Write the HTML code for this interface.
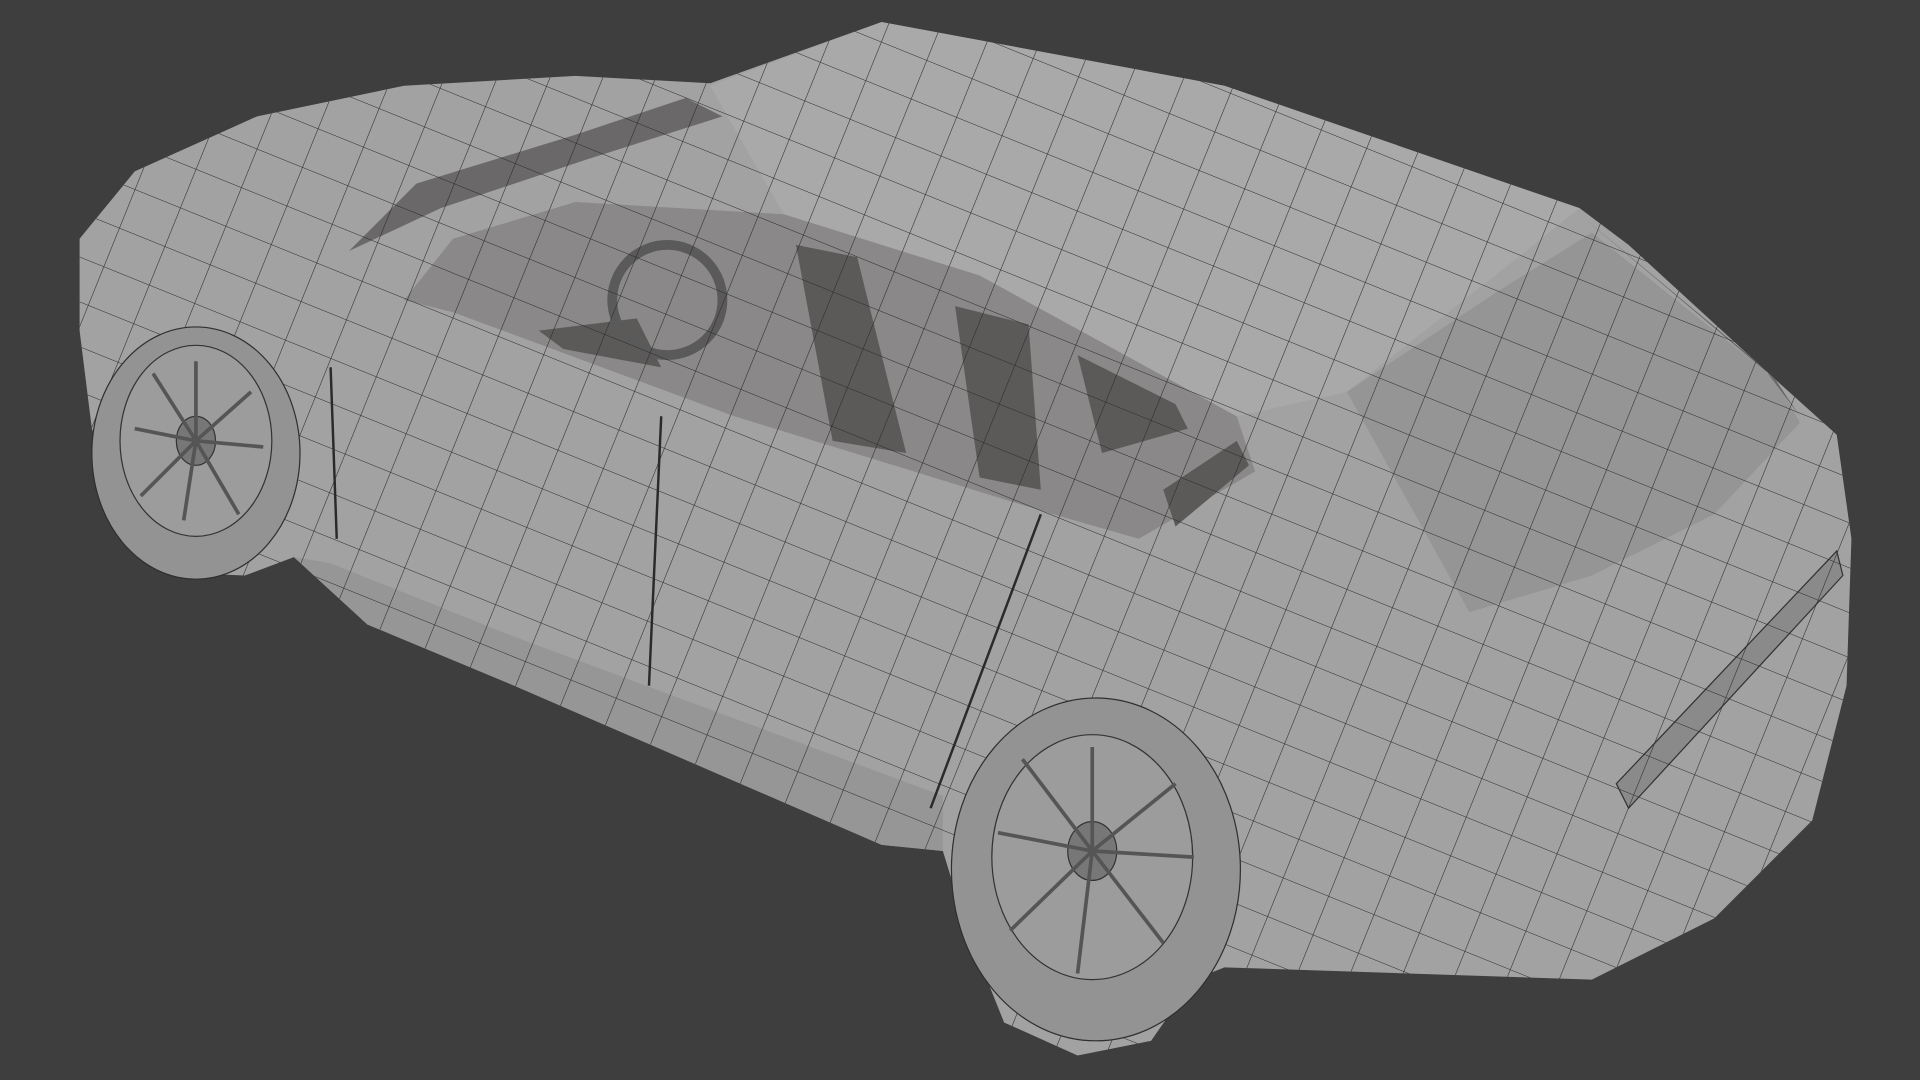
<!DOCTYPE html>
<html><head><meta charset="utf-8"><style>html,body{margin:0;padding:0;background:#3e3e3e;width:1920px;height:1080px;overflow:hidden}svg{display:block}</style></head>
<body>
<svg width="1920" height="1080" viewBox="0 0 1568 882" preserveAspectRatio="none" xmlns="http://www.w3.org/2000/svg">
<defs>
<pattern id="g" width="40" height="34" patternUnits="userSpaceOnUse" patternTransform="rotate(22)">
<path d="M0 0H40M0 0V34" stroke="#2a2a2a" stroke-width="0.9" fill="none"/>
</pattern>
<clipPath id="car"><path id="sil" d="M65 195 L110 140 L210 95 L330 70 L470 62 L580 68 L720 18 L1000 70 L1290 170 L1330 200 L1450 310 L1500 355 L1512 440 L1508 560 L1480 670 L1400 750 L1300 800 L1000 790 L975 800 L940 850 L880 862 L820 835 L790 760 L770 695 L720 690 L420 560 L300 510 L240 455 L200 470 L150 468 L100 420 L75 350 L65 270 Z"/></clipPath>
</defs>
<rect width="1568" height="882" fill="#3e3e3e"/>
<use href="#sil" fill="#a2a2a2"/>
<g clip-path="url(#car)">
<path d="M580 70 L720 18 L1000 70 L1290 170 L1240 210 L1100 320 L1010 340 L800 225 L640 175 Z" fill="#a9a9a9"/>
<path d="M285 205 L340 150 L470 110 L560 80 L590 95 L480 130 L360 170 Z" fill="#6a6868"/>
<path d="M330 245 L370 195 L470 165 L640 175 L800 225 L1010 340 L1025 385 L930 440 L860 420 L600 340 L370 255 Z" fill="#8a8888"/>
<path d="M440 270 L520 260 L540 300 L460 285 Z" fill="#5c5959"/>
<path d="M650 200 L700 210 L740 370 L680 360 Z" fill="#5c5959"/>
<path d="M780 250 L840 265 L850 400 L800 390 Z" fill="#5c5959"/>
<path d="M880 290 L960 330 L970 350 L900 370 Z" fill="#5c5959"/>
<path d="M950 400 L1010 360 L1020 380 L960 430 Z" fill="#5c5959"/>
<circle cx="545" cy="245" r="45" fill="none" stroke="#5a5a5a" stroke-width="8"/>
<path d="M1100 320 L1220 240 L1300 190 L1450 310 L1470 345 L1400 420 L1300 470 L1200 500 Z" fill="#959595"/>
<path d="M1290 175 L1450 310 L1470 340 L1440 300 Z" fill="#6a6868"/>
<path d="M1320 640 L1500 450 L1505 470 L1330 660 Z" fill="#8a8a8a" stroke="#333" stroke-width="1"/>
<path d="M240 455 L300 510 L420 560 L720 690 L770 695 L770 650 L420 520 L270 460 Z" fill="#969696"/>
<rect width="1568" height="882" fill="url(#g)"/>
</g>
<g>
<ellipse cx="160" cy="370" rx="85" ry="103" fill="#939393" stroke="#2f2f2f" stroke-width="1"/>
<ellipse cx="160" cy="360" rx="62" ry="78" fill="#9c9c9c" stroke="#333"/>
<ellipse cx="160" cy="360" rx="16" ry="20" fill="#777" stroke="#333"/>
<ellipse cx="895" cy="710" rx="118" ry="140" fill="#939393" stroke="#2f2f2f" stroke-width="1"/>
<ellipse cx="892" cy="700" rx="82" ry="100" fill="#9c9c9c" stroke="#333"/>
<ellipse cx="892" cy="695" rx="20" ry="24" fill="#777" stroke="#333"/>
<g stroke="#555" stroke-width="3">
<path d="M892 695 L892 610 M892 695 L960 640 M892 695 L975 700 M892 695 L950 770 M892 695 L880 795 M892 695 L825 760 M892 695 L815 680 M892 695 L835 620"/>
<path d="M160 360 L160 295 M160 360 L205 320 M160 360 L215 365 M160 360 L195 420 M160 360 L150 425 M160 360 L115 405 M160 360 L110 350 M160 360 L125 305"/>
</g>
</g>
<path d="M270 300 L275 440 M540 340 L530 560 M850 420 L760 660" stroke="#2a2a2a" stroke-width="2" fill="none"/>
</svg>
</body></html>
